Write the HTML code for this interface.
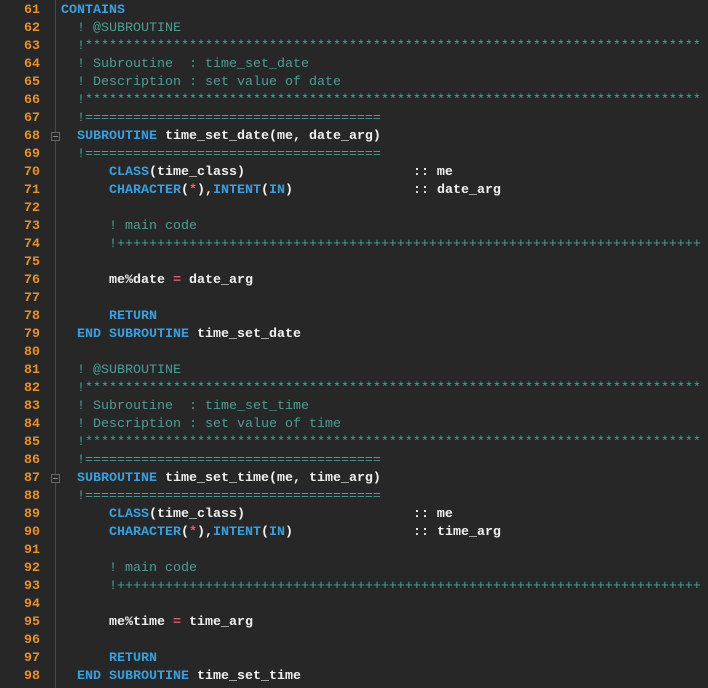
<!DOCTYPE html><html><head><style>
body{margin:0;background:#272727;width:708px;height:688px;overflow:hidden;position:relative}
.g{position:absolute;left:55px;top:0;width:1px;height:688px;background:#4a4a4a}
pre{margin:0;position:absolute;top:2px;left:0;font:bold 13.33px/18px "Liberation Mono",monospace;color:#f0f0f0}
.n{display:inline-block;width:40px;text-align:right;color:#e8902c;margin-right:21px}
.k{color:#3a9fe0}.c{color:#4e9d96;font-weight:normal}.r{color:#e06070}
.f{position:absolute;left:51px;width:7px;height:7px;border:1px solid #666;background:#272727}
.f:after{content:"";position:absolute;left:1px;top:3px;width:5px;height:1px;background:#888}
</style></head><body><div class="g"></div>
<div class="f" style="top:132px"></div><div class="f" style="top:474px"></div>
<pre><span class="n">61</span><span class="k">CONTAINS</span>
<span class="n">62</span>  <span class="c">! @SUBROUTINE</span>
<span class="n">63</span>  <span class="c">!*****************************************************************************</span>
<span class="n">64</span>  <span class="c">! Subroutine  : time_set_date</span>
<span class="n">65</span>  <span class="c">! Description : set value of date</span>
<span class="n">66</span>  <span class="c">!*****************************************************************************</span>
<span class="n">67</span>  <span class="c">!=====================================</span>
<span class="n">68</span>  <span class="k">SUBROUTINE</span> time_set_date(me, date_arg)
<span class="n">69</span>  <span class="c">!=====================================</span>
<span class="n">70</span>      <span class="k">CLASS</span>(time_class)                     :: me
<span class="n">71</span>      <span class="k">CHARACTER</span>(<span class="r">*</span>),<span class="k">INTENT</span>(<span class="k">IN</span>)               :: date_arg
<span class="n">72</span>
<span class="n">73</span>      <span class="c">! main code</span>
<span class="n">74</span>      <span class="c">!+++++++++++++++++++++++++++++++++++++++++++++++++++++++++++++++++++++++++</span>
<span class="n">75</span>
<span class="n">76</span>      me%date <span class="r">=</span> date_arg
<span class="n">77</span>
<span class="n">78</span>      <span class="k">RETURN</span>
<span class="n">79</span>  <span class="k">END SUBROUTINE</span> time_set_date
<span class="n">80</span>
<span class="n">81</span>  <span class="c">! @SUBROUTINE</span>
<span class="n">82</span>  <span class="c">!*****************************************************************************</span>
<span class="n">83</span>  <span class="c">! Subroutine  : time_set_time</span>
<span class="n">84</span>  <span class="c">! Description : set value of time</span>
<span class="n">85</span>  <span class="c">!*****************************************************************************</span>
<span class="n">86</span>  <span class="c">!=====================================</span>
<span class="n">87</span>  <span class="k">SUBROUTINE</span> time_set_time(me, time_arg)
<span class="n">88</span>  <span class="c">!=====================================</span>
<span class="n">89</span>      <span class="k">CLASS</span>(time_class)                     :: me
<span class="n">90</span>      <span class="k">CHARACTER</span>(<span class="r">*</span>),<span class="k">INTENT</span>(<span class="k">IN</span>)               :: time_arg
<span class="n">91</span>
<span class="n">92</span>      <span class="c">! main code</span>
<span class="n">93</span>      <span class="c">!+++++++++++++++++++++++++++++++++++++++++++++++++++++++++++++++++++++++++</span>
<span class="n">94</span>
<span class="n">95</span>      me%time <span class="r">=</span> time_arg
<span class="n">96</span>
<span class="n">97</span>      <span class="k">RETURN</span>
<span class="n">98</span>  <span class="k">END SUBROUTINE</span> time_set_time</pre>
</body></html>
